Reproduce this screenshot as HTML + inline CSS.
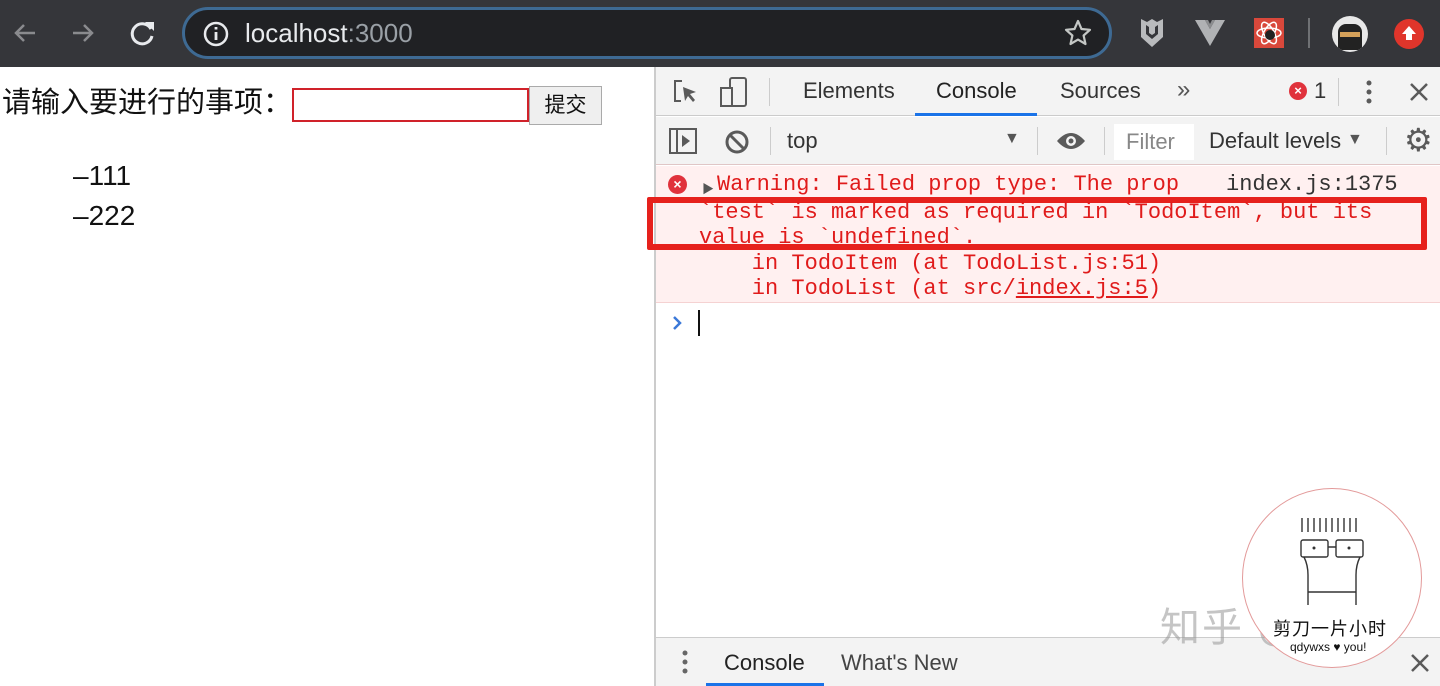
<!DOCTYPE html>
<html><head><meta charset="utf-8"><style>
*{margin:0;padding:0;box-sizing:border-box}
body{width:1440px;height:686px;overflow:hidden;background:#fff;font-family:"Liberation Sans","Noto Sans CJK SC",sans-serif;position:relative}
.a{position:absolute}
.mono{font-family:"Liberation Mono","DejaVu Sans Mono",monospace}
</style></head><body>
<!-- browser toolbar -->
<div class="a" style="left:0;top:0;width:1440px;height:67px;background:#35363a"></div>
<svg class="a" style="left:10px;top:18px" width="30" height="30" viewBox="0 0 30 30"><path d="M25 15H6M14 7l-8 8 8 8" stroke="#8a8b8e" stroke-width="2.5" fill="none"/></svg>
<svg class="a" style="left:68px;top:18px" width="30" height="30" viewBox="0 0 30 30"><path d="M5 15h19M16 7l8 8-8 8" stroke="#8a8b8e" stroke-width="2.5" fill="none"/></svg>
<svg class="a" style="left:128px;top:18px" width="30" height="30" viewBox="0 0 30 30"><path d="M23 11A10 10 0 1 0 24 18" stroke="#e8eaed" stroke-width="3" fill="none"/><path d="M17 4h9v9z" fill="#e8eaed"/></svg>
<div class="a" style="left:182px;top:7px;width:930px;height:52px;border-radius:26px;background:#202124;border:3px solid #3e6a93"></div>
<svg class="a" style="left:202px;top:20px" width="28" height="28" viewBox="0 0 28 28"><circle cx="14" cy="14" r="11" stroke="#e8eaed" stroke-width="2.5" fill="none"/><path d="M14 12v8M14 7v2.5" stroke="#e8eaed" stroke-width="2.8"/></svg>
<div class="a" style="left:245px;top:17px;font-size:26px;color:#e8eaed;line-height:32px">localhost<span style="color:#9aa0a6">:3000</span></div>
<svg class="a" style="left:1064px;top:19px" width="28" height="28" viewBox="0 0 28 28"><path d="M14 2l3.5 8 8.5.8-6.4 5.7 1.9 8.5L14 20.6 6.5 25l1.9-8.5L2 10.8l8.5-.8z" stroke="#c4c7c5" stroke-width="2.2" fill="none" stroke-linejoin="round"/></svg>
<svg class="a" style="left:1138px;top:17px" width="28" height="32" viewBox="0 0 28 32"><path d="M3 2l6 3 5-3 5 3 6-3v18l-11 10-11-10z" fill="#b9bbbd"/><path d="M8 8v9l6 5 6-5V8l-3 2v6l-3 2-3-2v-6z" fill="#35363a"/></svg>
<svg class="a" style="left:1195px;top:20px" width="30" height="26" viewBox="0 0 30 26"><path d="M0 0h10l5 9 5-9h10L15 26z" fill="#b0b2b4"/><path d="M10 0h3l2 4 2-4h3l-5 9z" fill="#8c8e90"/></svg>
<div class="a" style="left:1254px;top:18px;width:30px;height:30px;background:#d9483b"></div>
<svg class="a" style="left:1254px;top:18px" width="30" height="30" viewBox="0 0 30 30"><ellipse cx="15" cy="15" rx="12" ry="5" stroke="#fff" stroke-width="1.5" fill="none"/><ellipse cx="15" cy="15" rx="12" ry="5" stroke="#fff" stroke-width="1.5" fill="none" transform="rotate(60 15 15)"/><ellipse cx="15" cy="15" rx="12" ry="5" stroke="#fff" stroke-width="1.5" fill="none" transform="rotate(-60 15 15)"/><circle cx="16" cy="17" r="5" fill="#222"/></svg>
<div class="a" style="left:1308px;top:18px;width:2px;height:30px;background:#6f7174"></div>
<div class="a" style="left:1332px;top:16px;width:36px;height:36px;border-radius:50%;background:#e8e8e8;overflow:hidden"><div class="a" style="left:6px;top:8px;width:24px;height:26px;background:#222;border-radius:8px 8px 0 0"></div><div class="a" style="left:8px;top:16px;width:20px;height:5px;background:#d5a15a"></div></div>
<div class="a" style="left:1394px;top:19px;width:30px;height:30px;border-radius:50%;background:#e0352b"></div>
<svg class="a" style="left:1394px;top:19px" width="30" height="30" viewBox="0 0 30 30"><path d="M15 7l7 8h-4v6h-6v-6H8z" fill="#fff"/></svg>

<!-- page -->
<div class="a" style="left:2px;top:85px;font-size:29px;line-height:36px;color:#111">请输入要进行的事项：</div>
<div class="a" style="left:292px;top:88px;width:237px;height:34px;border:2px solid #d0222a;background:#fff"></div>
<div class="a" style="left:529px;top:86px;width:73px;height:39px;border:1px solid #aaa;background:#efefef;font-size:21px;line-height:37px;text-align:center;color:#111">提交</div>
<div class="a" style="left:73px;top:158px;font-size:28px;line-height:36px;color:#111">–111</div>
<div class="a" style="left:73px;top:198px;font-size:28px;line-height:36px;color:#111">–222</div>

<!-- devtools -->
<div class="a" style="left:654px;top:67px;width:2px;height:619px;background:#ccc"></div>
<div class="a" style="left:656px;top:67px;width:784px;height:49px;background:#f3f3f3;border-bottom:1px solid #cbcbcb"></div>
<svg class="a" style="left:672px;top:78px" width="28" height="28" viewBox="0 0 28 28"><path d="M10 3H3v20h6" stroke="#5a5a5a" stroke-width="2" fill="none"/><path d="M11 9l13 5-6 2 5 6-2 2-5-6-3 5z" fill="#5a5a5a"/></svg>
<svg class="a" style="left:718px;top:76px" width="32" height="32" viewBox="0 0 32 32"><rect x="12" y="2" width="16" height="28" rx="2" stroke="#5a5a5a" stroke-width="2" fill="none"/><rect x="3" y="12" width="11" height="18" stroke="#5a5a5a" stroke-width="2" fill="#f3f3f3"/></svg>
<div class="a" style="left:769px;top:78px;width:1px;height:28px;background:#ccc"></div>
<div class="a" style="left:803px;top:78px;font-size:22px;color:#333">Elements</div>
<div class="a" style="left:936px;top:78px;font-size:22px;color:#222">Console</div>
<div class="a" style="left:915px;top:113px;width:122px;height:3px;background:#1a73e8"></div>
<div class="a" style="left:1060px;top:78px;font-size:22px;color:#333">Sources</div>
<div class="a" style="left:1177px;top:76px;font-size:24px;color:#555">»</div>
<div class="a" style="left:1289px;top:82px;width:18px;height:18px;border-radius:50%;background:#e0323c;color:#fff;font-size:13px;line-height:18px;text-align:center;font-weight:bold">×</div>
<div class="a" style="left:1314px;top:78px;font-size:22px;color:#333">1</div>
<div class="a" style="left:1338px;top:78px;width:1px;height:28px;background:#ccc"></div>
<svg class="a" style="left:1362px;top:78px" width="14" height="28"><circle cx="7" cy="5" r="2.5" fill="#5a5a5a"/><circle cx="7" cy="14" r="2.5" fill="#5a5a5a"/><circle cx="7" cy="23" r="2.5" fill="#5a5a5a"/></svg>
<svg class="a" style="left:1409px;top:82px" width="20" height="20"><path d="M2 2l16 16M18 2L2 18" stroke="#5a5a5a" stroke-width="2.5"/></svg>

<div class="a" style="left:656px;top:117px;width:784px;height:48px;background:#f3f3f3;border-bottom:1px solid #e0c6c6"></div>
<svg class="a" style="left:668px;top:127px" width="30" height="28"><rect x="2" y="2" width="26" height="24" stroke="#5a5a5a" stroke-width="2" fill="none"/><path d="M9 2v24" stroke="#5a5a5a" stroke-width="2"/><path d="M14 8l8 6-8 6z" fill="#5a5a5a"/></svg>
<svg class="a" style="left:723px;top:128px" width="28" height="28"><circle cx="14" cy="14" r="10" stroke="#5a5a5a" stroke-width="3" fill="none"/><path d="M7 7l14 14" stroke="#5a5a5a" stroke-width="3"/></svg>
<div class="a" style="left:770px;top:127px;width:1px;height:28px;background:#ccc"></div>
<div class="a" style="left:787px;top:128px;font-size:22px;color:#333">top</div>
<div class="a" style="left:1004px;top:130px;font-size:16px;color:#555">▼</div>
<div class="a" style="left:1037px;top:127px;width:1px;height:28px;background:#ccc"></div>
<svg class="a" style="left:1056px;top:130px" width="30" height="22"><path d="M1 11Q15-5 29 11Q15 27 1 11z" fill="#5a5a5a"/><circle cx="15" cy="11" r="5" fill="#f3f3f3"/><circle cx="15" cy="11" r="2.5" fill="#5a5a5a"/></svg>
<div class="a" style="left:1104px;top:127px;width:1px;height:28px;background:#ccc"></div>
<div class="a" style="left:1114px;top:124px;width:80px;height:36px;background:#fff"></div>
<div class="a" style="left:1126px;top:129px;font-size:22px;color:#888">Filter</div>
<div class="a" style="left:1209px;top:128px;font-size:22px;color:#333">Default levels</div>
<div class="a" style="left:1347px;top:131px;font-size:16px;color:#555">▼</div>
<div class="a" style="left:1386px;top:127px;width:1px;height:28px;background:#ccc"></div>
<div class="a" style="left:1404px;top:122px;font-size:32px;color:#5a5a5a;line-height:36px">⚙</div>

<div class="a" style="left:656px;top:166px;width:784px;height:137px;background:#fff0f0;border-bottom:1px solid #f5d2d2"></div>
<div class="a" style="left:647px;top:197px;width:780px;height:53px;border:6px solid #e6211c;border-radius:2px"></div>
<div class="a" style="left:668px;top:175px;width:19px;height:19px;border-radius:50%;background:#e0323c;color:#fff;font-size:14px;line-height:19px;text-align:center;font-weight:bold">×</div>
<div class="a" style="left:702px;top:180px;font-size:12px;color:#555">▶</div>
<div class="a mono" style="left:717px;top:172px;font-size:22px;line-height:25.5px;color:#e01b1b;white-space:pre">Warning: Failed prop type: The prop</div>
<div class="a mono" style="left:1226px;top:172px;font-size:22px;line-height:25.5px;color:#333;white-space:pre">index.js:1375</div>
<div class="a mono" style="left:699px;top:199.5px;font-size:22px;line-height:25.5px;color:#e01b1b;white-space:pre">`test` is marked as required in `TodoItem`, but its
value is `undefined`.
    in TodoItem (at TodoList.js:51)
    in TodoList (at src/<u>index.js:5</u>)</div>

<svg class="a" style="left:671px;top:314px" width="14" height="18"><path d="M3 3l6 6-6 6" stroke="#3b78d8" stroke-width="2.5" fill="none"/></svg>
<div class="a" style="left:698px;top:310px;width:2px;height:26px;background:#111"></div>

<!-- drawer -->
<div class="a" style="left:656px;top:637px;width:784px;height:49px;background:#f3f3f3;border-top:1px solid #ccc"></div>
<svg class="a" style="left:678px;top:649px" width="14" height="28"><circle cx="7" cy="4" r="2.5" fill="#666"/><circle cx="7" cy="13" r="2.5" fill="#666"/><circle cx="7" cy="22" r="2.5" fill="#666"/></svg>
<div class="a" style="left:724px;top:650px;font-size:22px;color:#222">Console</div>
<div class="a" style="left:706px;top:683px;width:118px;height:3px;background:#1a73e8"></div>
<div class="a" style="left:841px;top:650px;font-size:22px;color:#444">What's New</div>
<svg class="a" style="left:1410px;top:653px" width="20" height="20"><path d="M2 2l16 16M18 2L2 18" stroke="#5a5a5a" stroke-width="2.5"/></svg>

<!-- watermark -->
<div class="a" style="left:1160px;top:603px;font-size:40px;color:rgba(150,150,150,0.55);line-height:50px;letter-spacing:2px">知乎 @ituoli</div>
<div class="a" style="left:1242px;top:488px;width:180px;height:180px;border-radius:50%;border:1.5px solid #e39a9a;background:#fff"></div>
<svg class="a" style="left:1290px;top:515px" width="80" height="100"><g stroke="#333" stroke-width="1.4" fill="none"><path d="M12 3v14M18 3v14M24 3v14M30 3v14M36 3v14M42 3v14M48 3v14M54 3v14M60 3v14M66 3v14"/><rect x="11" y="25" width="27" height="17" rx="2"/><rect x="46" y="25" width="27" height="17" rx="2"/><path d="M38 32h8M14 42q4 8 4 18v30M70 42q-4 8-4 18v30M18 77h48"/></g><circle cx="24" cy="33" r="1.5" fill="#333"/><circle cx="59" cy="33" r="1.5" fill="#333"/></svg>
<div class="a" style="left:1273px;top:615px;font-size:18px;color:#111;letter-spacing:1px">剪刀一片小时</div>
<div class="a" style="left:1290px;top:640px;font-size:12px;color:#111">qdywxs ♥ you!</div>
</body></html>
